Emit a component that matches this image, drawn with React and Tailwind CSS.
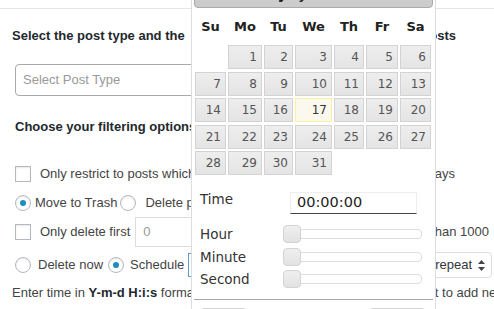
import React from "react";

const days = [
  [null, 1, 2, 3, 4, 5, 6],
  [7, 8, 9, 10, 11, 12, 13],
  [14, 15, 16, 17, 18, 19, 20],
  [21, 22, 23, 24, 25, 26, 27],
  [28, 29, 30, 31, null, null, null],
];

const cols = "grid grid-cols-[31px_34px_29px_37px_30px_32px_31px] gap-x-[2px]";

function Checkbox() {
  return <span className="w-4 h-4 shrink-0 border border-[#b4b9be] bg-white shadow-[inset_0_1px_2px_rgba(0,0,0,0.1)]" />;
}

function Radio({ checked }) {
  return (
    <span className="w-4 h-4 shrink-0 rounded-full border border-[#b4b9be] bg-white shadow-[inset_0_1px_2px_rgba(0,0,0,0.1)] flex items-center justify-center">
      {checked && <span className="w-[6px] h-[6px] rounded-full bg-[#1e8cbe]" />}
    </span>
  );
}

function Slider({ label }) {
  return (
    <div className="flex items-center h-[22.5px]">
      <span className="w-[91px] pl-[8px] text-[13.5px] text-[#333]">{label}</span>
      <div className="relative w-[139px] h-[10px] border border-[#dddddd] rounded-[4px] bg-white">
        <span className="absolute left-[-1px] top-[-5px] w-[18px] h-[18px] rounded-[4px] border border-[#d3d3d3] bg-gradient-to-b from-[#efefef] to-[#e2e2e2]" />
      </div>
    </div>
  );
}

export default function App() {
  return (
    <div className="relative w-[494px] h-[309px] overflow-hidden bg-white font-['Liberation_Sans',Arial,sans-serif] text-[13px] text-[#444]">
      <div className="mt-[8px] border-t border-[#e5e5e5] pl-[12px]">
        <h3 className="mt-[17px] h-[20px] leading-[20px] font-bold text-[#23282d] flex justify-between w-[444px] whitespace-nowrap">
          <span>Select the post type and the</span>
          <span>one to delete posts</span>
        </h3>

        <div className="mt-[18px] ml-[3px] h-[32px] w-[400px] border border-[#aaaaaa] rounded-[4px] pl-[7px] flex items-center text-[#999]">
          Select Post Type
        </div>

        <h4 className="mt-[21px] ml-[3px] h-[20px] leading-[20px] font-bold text-[#23282d] whitespace-nowrap">
          Choose your filtering options
        </h4>

        <div className="mt-[27px] ml-[3px] h-[20px] w-[440px] flex items-center whitespace-nowrap">
          <Checkbox />
          <span className="ml-[9px]">Only restrict to posts which are</span>
          <span className="ml-auto">older than days</span>
        </div>

        <div className="mt-[9px] ml-[3px] h-[20px] flex items-center whitespace-nowrap">
          <Radio checked />
          <span className="ml-[4px]">Move to Trash</span>
          <span className="ml-[3px]"><Radio /></span>
          <span className="ml-[9px]">Delete permanently</span>
        </div>

        <div className="mt-[4px] ml-[3px] h-[30px] w-[474px] flex items-center whitespace-nowrap">
          <Checkbox />
          <span className="ml-[9px]">Only delete first</span>
          <span className="ml-[5px] h-[30px] w-[120px] border border-[#dddddd] pl-[7px] flex items-center text-[#999]">0</span>
          <span className="ml-auto">posts. Use less than 1000</span>
        </div>

        <div className="mt-[5px] ml-[3px] h-[26px] w-[477px] flex items-center whitespace-nowrap">
          <Radio />
          <span className="ml-[7px]">Delete now</span>
          <span className="ml-[5px]"><Radio checked /></span>
          <span className="ml-[6px]">Schedule</span>
          <span className="ml-[4px] h-[24px] w-[150px] border border-[#5b9dd9]" />
          <span className="ml-auto h-[26px] border border-[#dddddd] rounded-[4px] flex items-center pl-[8px] pr-[6px] gap-[6px] text-[#32373c]">
            Don't repeat
            <svg width="7" height="11" viewBox="0 0 7 11" fill="#444">
              <path d="M3.5 0 L7 4 H0 Z M0 7 H7 L3.5 11 Z" />
            </svg>
          </span>
        </div>

        <div className="mt-[6px] h-[18px] flex items-center whitespace-nowrap">
          <span className="w-[399px] shrink-0 overflow-hidden">
            Enter time in <b className="text-[#23282d]">Y-m-d H:i:s</b> format or pick a date in the calendar if you
          </span>
          <span>want to add new schedules</span>
        </div>
      </div>

      <div className="absolute left-[191px] top-[-24px] w-[245px] h-[345px] border border-[#dddddd] bg-white font-['DejaVu_Sans',Verdana,sans-serif]">
        <div className="mx-[2px] mt-[3px] h-[28px] rounded-[4px] border border-[#aaaaaa] bg-[#cccccc] flex items-end justify-center">
          <span className="mb-[6px] leading-[13px] text-[13px] font-bold text-[#222]">July 2017</span>
        </div>

        <div className={`${cols} ml-[3px] mt-[9px] h-[20px] text-[13px] font-bold text-[#222]`}>
          {["Su", "Mo", "Tu", "We", "Th", "Fr", "Sa"].map((d) => (
            <span key={d} className="flex items-center justify-center">{d}</span>
          ))}
        </div>

        <div className={`${cols} gap-y-[2.5px] ml-[3px] mt-[8px] text-[12px]`}>
          {days.flat().map((d, i) =>
            d === null ? (
              <span key={i} className="h-[24px]" />
            ) : d === 17 ? (
              <span key={i} className="h-[24px] border border-[#fcefa1] bg-[#fbf9ee] text-[#363636] flex items-center justify-end pr-[4px]">{d}</span>
            ) : (
              <span key={i} className="h-[24px] border border-[#d3d3d3] bg-gradient-to-b from-[#eeeeee] to-[#e4e4e4] text-[#555] flex items-center justify-end pr-[4px]">{d}</span>
            )
          )}
        </div>

        <div className="mt-[17px] h-[22px] flex items-start">
          <span className="w-[98px] pl-[8px] pt-[1px] leading-[13px] text-[13.5px] text-[#333]">Time</span>
          <span className="w-[127px] h-[22px] border border-[#eeeeee] border-b-[#444] pl-[6px] flex items-center text-[14.5px] text-[#222]">00:00:00</span>
        </div>

        <div className="mt-[9px] flex flex-col">
          <Slider label="Hour" />
          <Slider label="Minute" />
          <Slider label="Second" />
        </div>

        <div className="mt-[8px] mx-[2px] border-t border-[#aaaaaa]" />

        <div className="mt-[8px] flex justify-between pl-[8px] pr-[9px]">
          <span className="w-[47px] h-[24px] rounded-[4px] border border-[#d3d3d3] bg-gradient-to-b from-[#efefef] to-[#e2e2e2]" />
          <span className="w-[57px] h-[24px] rounded-[4px] border border-[#d3d3d3] bg-gradient-to-b from-[#efefef] to-[#e2e2e2]" />
        </div>
      </div>
    </div>
  );
}
